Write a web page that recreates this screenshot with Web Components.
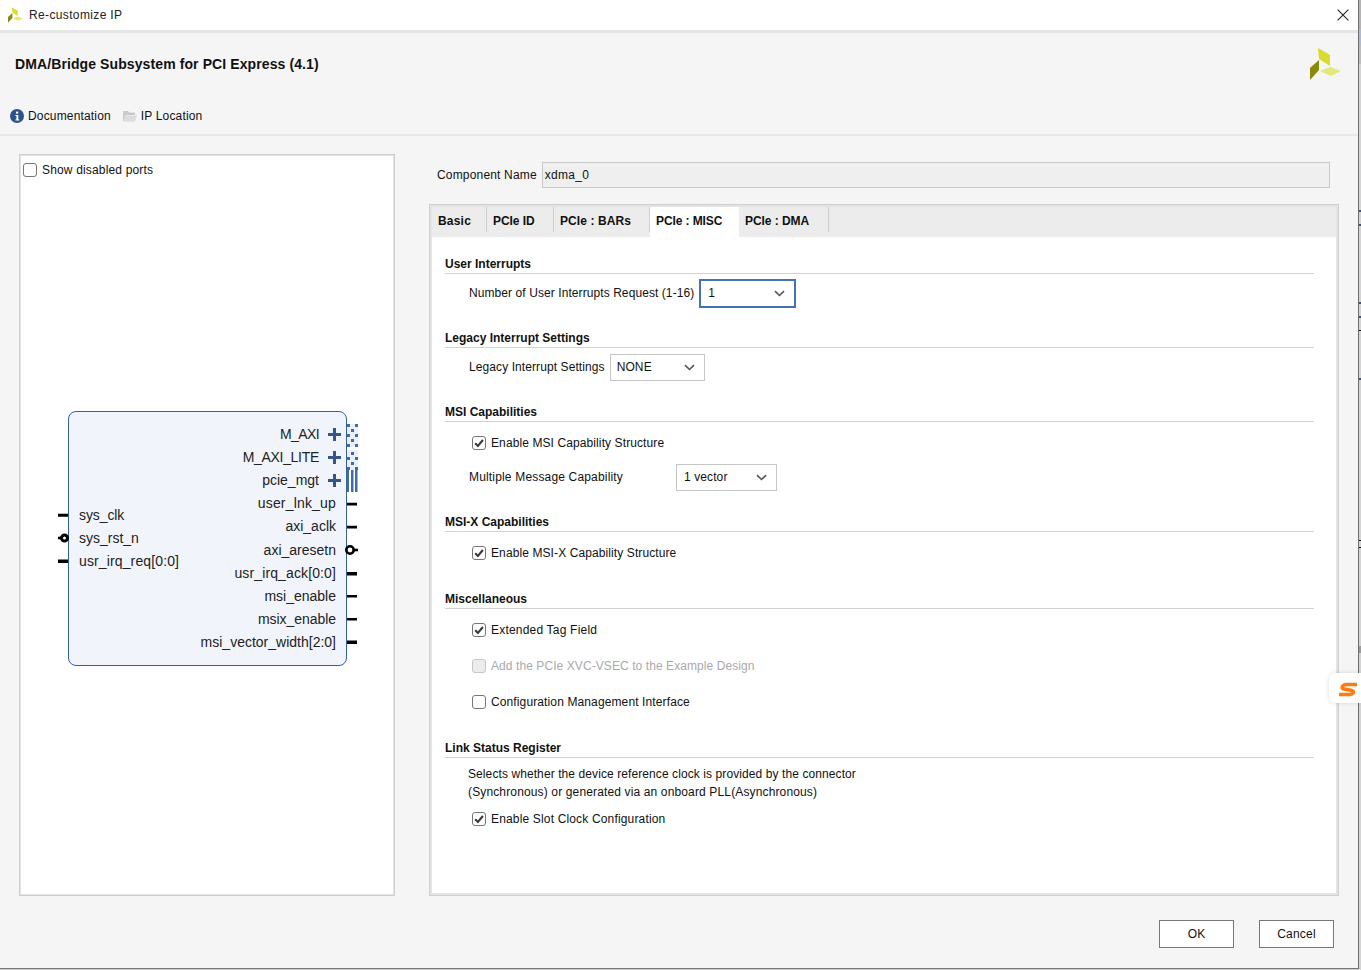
<!DOCTYPE html>
<html><head><meta charset="utf-8">
<style>
html,body{margin:0;padding:0;background:#c9c9c9}
body{width:1361px;height:970px;overflow:hidden;font:12px "Liberation Sans",Arial,sans-serif;color:#111;position:relative}
</style></head><body>
<template id="t-logo"><style>:host{display:block}svg{display:block;width:100%;height:100%}</style>
<svg viewBox="0 0 31 32"><polygon points="8,0 20,7 20,18 9,11" fill="#d9dc2e"/><polygon points="0,20 9,12 9,22 0,32" fill="#868b0c"/><polygon points="20,19 31,23 21,28 10,23" fill="#e3e878"/></svg></template>

<template id="t-check"><style>
:host{display:flex;align-items:center;gap:5px;letter-spacing:.1px}
.b{width:12px;height:12px;border:1px solid #767676;border-radius:3px;background:#fff;box-sizing:content-box;display:flex;flex:none}
:host([disabled]) .b{background:#ececec;border-color:#c6c6c6}
:host([disabled]) .l{color:#a9a9ad}
svg{display:none;width:12px;height:12px}
:host([checked]) svg{display:block}
</style><span class="b"><svg viewBox="0 0 12 12"><path d="M2.200 6.200 4.900 8.900 9.900 3" fill="none" stroke="#3a3a3a" stroke-width="2.100"/></svg></span><span class="l"><slot></slot></span></template>

<template id="t-select"><style>
:host{display:flex;align-items:center;justify-content:space-between;box-sizing:border-box;background:#fff;border:1px solid #c6c6c6;padding:0 9px 0 var(--pl,6px);letter-spacing:.1px}
:host([focus]){border:2px solid #4472b8;padding-left:7px;padding-right:9px}
svg{width:11px;height:7px;display:block}
</style><span><slot></slot></span><svg viewBox="0 0 11 7"><path d="M1 1.200 5.500 5.500 10 1.200" fill="none" stroke="#555" stroke-width="1.600"/></svg></template>

<template id="t-section"><style>
:host{display:block;padding-bottom:18px}
.h{height:20px;box-sizing:border-box;border-bottom:1px solid #d2d2d2;font-weight:bold;line-height:21px;margin-right:22px}
.b{padding-left:24px;padding-top:var(--pt,2px)}
</style><div class="h"></div><div class="b"><slot></slot></div></template>

<template id="t-row"><style>
:host{display:flex;align-items:center;gap:5px;height:var(--rh,34px);letter-spacing:.09px}
</style><slot></slot></template>

<template id="t-tab"><style>
:host{display:flex;align-items:center;height:30px;box-sizing:border-box;font-weight:bold;letter-spacing:-.05px;position:relative;padding:0 0 2px 6px;background:#ececec;flex:none}
:host::after{content:"";position:absolute;right:0;top:0;height:25px;width:1px;background:#cfcfcf}
:host([active]){background:#fff}
:host([active])::after{display:none}
</style><slot></slot></template>

<template id="t-tabpanel"><style>
:host{display:flex;flex-direction:column;box-sizing:border-box;border:1px solid #cfcfcf;padding:2px;background:#e3e3e3}
.tabs{display:flex;background:#ececec;height:30px;flex:none}
.c{flex:1;padding:17px 0 0 13px;background:#fff}
</style><div class="tabs"><slot name="tabs"></slot></div><div class="c"><slot></slot></div></template>

<template id="t-button"><style>
:host{display:flex;align-items:center;justify-content:center;width:75px;height:28px;box-sizing:border-box;border:1px solid #777;background:#fff;letter-spacing:.2px}
</style><slot></slot></template>

<template id="t-pin"><style>
:host{position:absolute;height:23px;display:flex;align-items:center;font:14px "Liberation Sans",Arial,sans-serif;color:#222;white-space:nowrap}
</style><slot></slot></template>

<template id="t-strip"><style>
:host{position:absolute;left:1359px;top:0;width:2px;height:970px;background:linear-gradient(#b4b4b4 0 29px,#a9bbd9 29px 45px,#bdbdbd 45px 64px,#d4d4d4 64px 210px,#34548c 210px 212px,#d4d4d4 212px 224px,#34548c 224px 226px,#d4d4d4 226px 302px,#34548c 302px 304px,#d4d4d4 304px 316px,#34548c 316px 318px,#d4d4d4 318px 330px,#111 330px 331px,#d4d4d4 331px 378px,#34548c 378px 380px,#d4d4d4 380px 540px,#111 540px 541px,#d4d4d4 541px 547px,#111 547px 548px,#d4d4d4 548px 646px,#9a9a9a 646px 653px,#d4d4d4 653px 970px)}
</style></template>

<template id="t-app"><style>
:host{display:flex;flex-direction:column;width:1359px;height:969px;box-sizing:border-box;background:#f5f5f5;border-right:1px solid #6e6e6e;border-bottom:1px solid #777;position:relative}
.title{height:30px;flex:none;background:#fff;border-bottom:3px solid #e5e5e5;box-sizing:content-box;display:flex;align-items:center;padding-left:8px;gap:6px;letter-spacing:.36px;color:#222}
.title x-logo{width:15px;height:16px}
.x{margin-left:auto;margin-right:9px;width:12px;height:12px;display:block}
.head{height:103px;flex:none;border-bottom:2px solid #e8e8e8;box-sizing:border-box;position:relative;display:flex;flex-direction:column;padding:22px 15px 0 15px}
.t{font-weight:bold;font-size:14px;letter-spacing:.1px;line-height:18px;color:#111}
.big{position:absolute;right:17px;top:15px;width:31px;height:32px}
.links{display:flex;align-items:center;margin:36px 0 0 -5px;gap:12px;letter-spacing:.16px}
.link{display:flex;align-items:center;gap:4px}
.main{flex:1;display:flex;padding:18px 19px 0 19px;gap:34px;min-height:0}
.left{width:376px;height:742px;flex:none;box-sizing:border-box;border:2px solid #e3e3e3;background:#fff;position:relative;padding:7px 0 0 2px}
.left::before{content:"";position:absolute;inset:-2px;border:1px solid #cfcfcf;pointer-events:none}
.right{flex:1;display:flex;flex-direction:column;min-width:0}
.name{display:flex;align-items:center;height:26px;margin-top:8px;gap:5px;padding-left:8px;letter-spacing:.17px;flex:none}
.name .f{flex:1;height:26px;box-sizing:border-box;border:1px solid #c8c8c8;background:#efefef;display:flex;align-items:center;padding-left:2px;margin-right:9px;letter-spacing:.3px}
x-tabpanel{height:692px;margin-top:16px;flex:none}
.foot{height:72px;flex:none;box-sizing:border-box;display:flex;justify-content:flex-end;align-items:flex-start;gap:25px;padding:24px 24px 0 0}
.block{position:absolute;left:47px;top:255px;width:279px;height:255px;box-sizing:border-box;border:1px solid #34609c;border-radius:8px;background:#f1f5fb}
.over{position:absolute;left:0;top:0;width:372px;height:738px;pointer-events:none}
</style>
<div class="title"><x-logo></x-logo><span>Re-customize IP</span>
<svg class="x" viewBox="0 0 12 12"><path d="M.6.6 11.400 11.400M11.400.6.6 11.400" stroke="#222" stroke-width="1.100" fill="none"/></svg></div>
<div class="head"><div class="t">DMA/Bridge Subsystem for PCI Express (4.1)</div><x-logo class="big"></x-logo>
<div class="links"><span class="link"><svg width="14" height="14" viewBox="0 0 14 14"><circle cx="7" cy="7" r="7" fill="#2f5289"/><rect x="6" y="2.600" width="2.200" height="2" fill="#fff"/><path d="M5.400 6h2.900v4.600h1v1H5.400v-1h1V7h-1z" fill="#fff"/></svg>Documentation</span>
<span class="link"><svg width="14" height="12" viewBox="0 0 14 12"><path d="M0 1h5l1 1.500h6V5H3L1 11H0z" fill="#cbcbcb"/><path d="M3 5.500h11L12 11.500H1z" fill="#dcdcdc"/></svg>IP Location</span></div></div>
<div class="main">
<div class="left"><x-check style="letter-spacing:.16px">Show disabled ports</x-check>
<div class="block"></div>
<svg class="over" viewBox="0 0 372 738">
<path d="M326 268h11v23h-11zM326 294h11v20h-11z" fill="#e9f0f9"/>
<path d="M326 268h3v3h-3zM334 268h3v3h-3zM330 273h3v3h-3zM326 278h3v3h-3zM334 278h3v3h-3zM330 283h3v3h-3zM326 288h3v3h-3zM334 288h3v3h-3zM330 296h3v3h-3zM326 301h3v3h-3zM334 301h3v3h-3zM330 306h3v3h-3zM326 311h3v3h-3zM334 311h3v3h-3z" fill="#3f6ca6"/>
<path d="M325.500 314h2.500v22h-2.500zM330 314h2.500v22H330zM334 314h2.500v22H334z" fill="#3f6ca6"/>
<g fill="#34548c"><path d="M307 277h13v3h-13zM312 272h3v13h-3zM307 300h13v3h-13zM312 295h3v13h-3zM307 323h13v3h-13zM312 318h3v13h-3z"/></g>
<g fill="#000"><path d="M326 346.800h10v2.600h-10zM326 369.800h10v2.600h-10zM326 416h10v3.500h-10zM326 439h10v2.600h-10zM326 462h10v2.600h-10zM326 484.500h10v3.500h-10zM37 357.700h10v3h-10zM37 403.500h10v3.500h-10z"/>
<circle cx="43.500" cy="382" r="3" fill="none" stroke="#000" stroke-width="3"/><path d="M37 380.700h3.500v2.600H37z"/>
<circle cx="329" cy="394" r="3.700" fill="none" stroke="#000" stroke-width="2.600"/><path d="M332.500 392.700h4.500v2.600h-4.500z"/></g>
</svg>
<x-pin style="right:74px;top:266px;letter-spacing:-.6px">M_AXI</x-pin>
<x-pin style="right:74px;top:289px;letter-spacing:-.3px">M_AXI_LITE</x-pin>
<x-pin style="right:74px;top:312px">pcie_mgt</x-pin>
<x-pin style="right:57px;top:335px;letter-spacing:.18px">user_lnk_up</x-pin>
<x-pin style="right:57px;top:358px">axi_aclk</x-pin>
<x-pin style="right:57px;top:382px">axi_aresetn</x-pin>
<x-pin style="right:57px;top:405px;letter-spacing:.12px">usr_irq_ack[0:0]</x-pin>
<x-pin style="right:57px;top:428px">msi_enable</x-pin>
<x-pin style="right:57px;top:451px;letter-spacing:-.05px">msix_enable</x-pin>
<x-pin style="right:57px;top:474px">msi_vector_width[2:0]</x-pin>
<x-pin style="left:58px;top:347px;letter-spacing:-.1px">sys_clk</x-pin>
<x-pin style="left:58px;top:370px">sys_rst_n</x-pin>
<x-pin style="left:58px;top:393px;letter-spacing:.13px">usr_irq_req[0:0]</x-pin>
</div>
<div class="right">
<div class="name"><span>Component Name</span><span class="f">xdma_0</span></div>
<x-tabpanel>
<x-tab slot="tabs" style="width:55px;letter-spacing:.2px">Basic</x-tab>
<x-tab slot="tabs" style="width:67px">PCIe ID</x-tab>
<x-tab slot="tabs" style="width:96px;letter-spacing:.1px">PCIe : BARs</x-tab>
<x-tab slot="tabs" active style="width:89px;letter-spacing:-.1px">PCIe : MISC</x-tab>
<x-tab slot="tabs" style="width:90px">PCIe : DMA</x-tab>
<x-section heading="User Interrupts" style="--pt:2px"><x-row style="letter-spacing:.08px">Number of User Interrupts Request (1-16)<x-select focus style="width:97px;height:29px">1</x-select></x-row></x-section>
<x-section heading="Legacy Interrupt Settings"><x-row>Legacy Interrupt Settings<x-select style="width:95px;height:27px">NONE</x-select></x-row></x-section>
<x-section heading="MSI Capabilities" style="--pt:4px"><x-row><x-check checked style="margin-left:3px">Enable MSI Capability Structure</x-check></x-row><x-row style="letter-spacing:.17px"><span style="width:202px;flex:none">Multiple Message Capability</span><x-select style="width:101px;height:27px;--pl:7px">1 vector</x-select></x-row></x-section>
<x-section heading="MSI-X Capabilities" style="--pt:4px;padding-bottom:19px"><x-row><x-check checked style="margin-left:3px">Enable MSI-X Capability Structure</x-check></x-row></x-section>
<x-section heading="Miscellaneous" style="--pt:3px;--rh:36px"><x-row><x-check checked style="margin-left:3px;letter-spacing:.2px">Extended Tag Field</x-check></x-row><x-row><x-check disabled style="margin-left:3px;letter-spacing:.08px">Add the PCIe XVC-VSEC to the Example Design</x-check></x-row><x-row><x-check style="margin-left:3px;letter-spacing:.12px">Configuration Management Interface</x-check></x-row></x-section>
<x-section heading="Link Status Register" style="--pt:7px;--rh:18px"><x-row style="margin-left:-1px">Selects whether the device reference clock is provided by the connector</x-row><x-row style="margin-left:-1px;letter-spacing:.14px">(Synchronous) or generated via an onboard PLL(Asynchronous)</x-row><x-row style="height:36px"><x-check checked style="margin-left:3px;letter-spacing:.16px">Enable Slot Clock Configuration</x-check></x-row></x-section>
</x-tabpanel>
</div></div>
<div class="foot"><x-button>OK</x-button><x-button>Cancel</x-button></div>
</template>

<template id="t-badge"><style>
:host{position:absolute;left:1329px;top:673px;width:32px;height:30px;box-sizing:border-box;background:#fff;border-radius:7px 0 0 7px;box-shadow:0 0 4px rgba(0,0,0,.14);display:flex;align-items:center;padding:1px 0 0 9px}
svg{width:20px;height:16px;display:block}
</style><svg viewBox="0 0 20 16"><path d="M19 3.500H9C4 3.500 2.500 7.500 6 8L14 9.500C17 10.500 15 13.500 12 13.500H1" fill="none" stroke="#ff7a0f" stroke-width="3.400"/></svg></template>

<x-app></x-app>
<x-strip></x-strip>
<x-badge></x-badge>

<script>
function def(name,tpl,extra){
  customElements.define(name,class extends HTMLElement{
    constructor(){super();this.attachShadow({mode:"open"}).appendChild(document.getElementById(tpl).content.cloneNode(true));}
    connectedCallback(){if(extra)extra(this);}
  });
}
def("x-logo","t-logo");def("x-check","t-check");def("x-select","t-select");
def("x-section","t-section",e=>{e.shadowRoot.querySelector(".h").textContent=e.getAttribute("heading");});
def("x-row","t-row");def("x-tab","t-tab");def("x-tabpanel","t-tabpanel");def("x-button","t-button");
def("x-pin","t-pin");def("x-strip","t-strip");def("x-app","t-app");def("x-badge","t-badge");
</script>
</body></html>
